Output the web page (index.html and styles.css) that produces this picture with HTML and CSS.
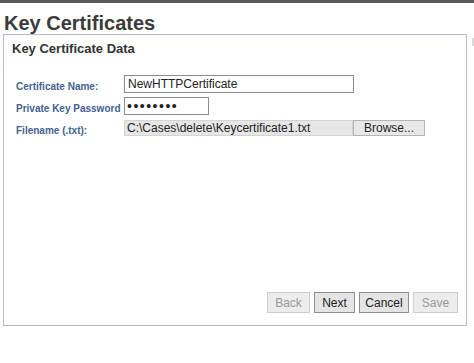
FILE: index.html
```html
<!DOCTYPE html>
<html lang="en">
<head>
  <meta charset="UTF-8">
  <title>Key Certificates</title>
  <link rel="stylesheet" href="styles.css">
</head>
<body>
  <div class="topbar"></div>
  <h1 class="title">Key Certificates</h1>

  <div class="panel">
    <h2 class="panel-title">Key Certificate Data</h2>

    <form class="cert-form">
      <div class="row">
        <label for="certName">Certificate Name:</label>
        <input type="text" id="certName" class="field field-name" value="NewHTTPCertificate">
      </div>
      <div class="row">
        <label for="keyPass">Private Key Password</label>
        <input type="password" id="keyPass" class="field field-pass" value="password">
      </div>
      <div class="row">
        <label for="fileName">Filename (.txt):</label>
        <div class="file-box">
          <span id="fileName" class="file-path">C:\Cases\delete\Keycertificate1.txt</span>
          <button type="button" class="browse">Browse...</button>
        </div>
      </div>
    </form>

    <div class="actions">
      <button type="button" class="btn btn-back" disabled>Back</button>
      <button type="button" class="btn btn-next">Next</button>
      <button type="button" class="btn btn-cancel">Cancel</button>
      <button type="button" class="btn btn-save" disabled>Save</button>
    </div>
  </div>

  <div class="scroll-nub"></div>
</body>
</html>
```

FILE: styles.css
```css
body { margin: 0; background: #fff; font-family: "Liberation Sans", Arial, sans-serif; color: #333; position: relative; height: 363px; overflow: hidden; }
.topbar { height: 3px; background: #5a5a5a; }
.title { margin: 9px 0 0 4px; font-size: 20px; line-height: 22px; font-weight: bold; color: #3b3b3b; }
.panel { margin: 0 0 0 3px; width: 464px; height: 292px; border: 1px solid #b9b9df; box-sizing: border-box; position: relative; }
.panel-title { margin: 6px 0 0 8px; font-size: 13px; line-height: 16px; font-weight: bold; color: #333; }
.cert-form { margin: 16px 0 0 0; }
.row { display: flex; align-items: center; height: 22px; }
.row label { flex: 0 0 120px; width: 120px; min-width: 0; box-sizing: border-box; padding-left: 12px; padding-top: 5px; white-space: nowrap; font-size: 10px; font-weight: bold; color: #43628f; }
.field { height: 18px; box-sizing: border-box; border: 1px solid #8c8c8c; padding: 0 3px; font-family: "Liberation Sans", Arial, sans-serif; font-size: 12px; color: #222; margin: 0; }
.field-name { width: 230px; }
.field-pass { width: 85px; font-size: 14px; letter-spacing: 1.5px; padding-left: 2px; }
.file-box { display: flex; height: 16px; }
.file-path { width: 229px; background: #e6e6e6; border: 1px solid #d4d4d4; box-sizing: border-box; font-size: 12px; line-height: 14px; padding-left: 2px; color: #222; }
.browse { width: 72px; height: 16px; margin: 0; padding: 0; border: 1px solid #b5b5b5; background: #e8e8e8; font-family: "Liberation Sans", Arial, sans-serif; font-size: 12px; color: #222; }
.actions { position: absolute; right: 8px; bottom: 12px; display: flex; gap: 4px; }
.btn { height: 21px; padding: 0; margin: 0; border: 1px solid #8e8e8e; background: #e4e4e4; font-family: "Liberation Sans", Arial, sans-serif; font-size: 12px; color: #222; }
.btn:disabled { border-color: #cdcdcd; background: #ececec; color: #999; }
.btn-back { width: 43px; }
.btn-next { width: 41px; }
.btn-cancel { width: 50px; }
.btn-save { width: 45px; }
.scroll-nub { position: absolute; right: 0; top: 38px; width: 2px; height: 8px; background: #d9d9d9; }
```
